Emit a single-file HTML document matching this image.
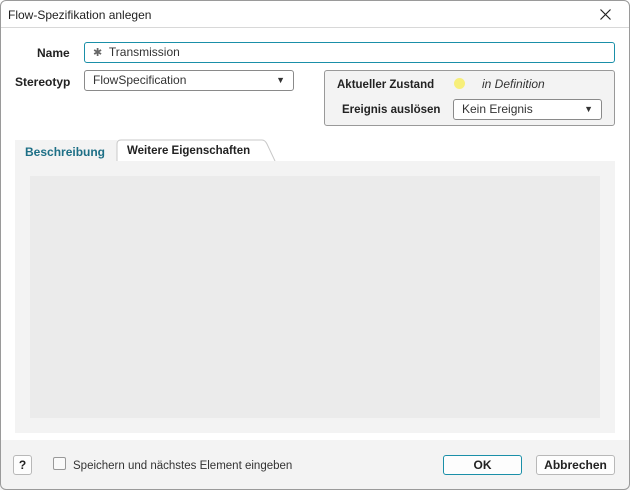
<!DOCTYPE html>
<html><head><style>
*{box-sizing:border-box;margin:0;padding:0}
body{width:630px;height:490px;font-family:"Liberation Sans",sans-serif;font-size:12px;line-height:14px;color:#222;background:#fff;position:relative;overflow:hidden}
.abs{position:absolute}
.lbl{font-weight:bold;font-size:12px;color:#222}
.box{border:1px solid #8a8a8a;border-radius:3px;background:#fff;padding-left:8px;line-height:18px;font-size:12px;color:#333}
.arr{position:absolute;right:8px;top:0;font-size:9px;color:#333}
.btn{border:1px solid #b8b8b8;border-radius:3px;background:#fdfdfd;text-align:center;line-height:18px;font-weight:bold;font-size:12px}
</style></head><body>
<div class="abs" style="left:8px;top:8px;font-size:12px">Flow-Spezifikation anlegen</div>
<svg class="abs" style="left:600px;top:9px" width="11" height="11"><path d="M0.5 0.5L10.5 10.5M10.5 0.5L0.5 10.5" stroke="#222" stroke-width="1.2"/></svg>
<div class="abs" style="left:0;top:27px;width:630px;height:1px;background:#d8d8d8"></div>

<div class="abs lbl" style="left:37px;top:46px">Name</div>
<div class="abs box" style="left:84px;top:42px;width:531px;height:21px;border-color:#1a8fa8"><span style="color:#666;font-size:11px">✱</span>&nbsp;&nbsp;Transmission</div>
<div class="abs lbl" style="left:15px;top:75px">Stereotyp</div>
<div class="abs box" style="left:84px;top:70px;width:210px;height:21px">FlowSpecification<span class="arr">▼</span></div>

<div class="abs" style="left:324px;top:70px;width:291px;height:56px;background:#f3f3f3;border:1px solid #999;border-radius:3px"></div>
<div class="abs lbl" style="left:337px;top:78px;font-size:11.5px">Aktueller Zustand</div>
<div class="abs" style="left:454px;top:78px;width:11px;height:11px;border-radius:50%;background:#f7ef7a"></div>
<div class="abs" style="left:482px;top:77px;font-style:italic;color:#333">in Definition</div>
<div class="abs lbl" style="left:342px;top:103px;font-size:11.5px">Ereignis auslösen</div>
<div class="abs box" style="left:453px;top:99px;width:149px;height:21px">Kein Ereignis<span class="arr">▼</span></div>

<div class="abs" style="left:15px;top:140px;width:102px;height:22px;background:#f3f3f3"></div>
<div class="abs" style="left:25px;top:145px;font-weight:bold;color:#1d6f86">Beschreibung</div>
<svg class="abs" style="left:116px;top:139px" width="160" height="23"><path d="M1 22V5Q1 1 5 1H146Q149 1 151 5L159 22" fill="#fff" stroke="#c8c8c8"/></svg>
<div class="abs lbl" style="left:127px;top:144px;font-size:11.5px">Weitere Eigenschaften</div>
<div class="abs" style="left:15px;top:161px;width:600px;height:272px;background:#f3f3f3"></div>
<div class="abs" style="left:30px;top:176px;width:570px;height:242px;background:#ebebeb"></div>

<div class="abs" style="left:0;top:440px;width:630px;height:50px;background:#f3f3f3"></div>
<div class="abs btn" style="left:13px;top:455px;width:19px;height:20px">?</div>
<div class="abs" style="left:53px;top:457px;width:13px;height:13px;border:1px solid #999;border-radius:2px;background:#fafafa"></div>
<div class="abs" style="left:73px;top:459px;color:#333;font-size:11.5px">Speichern und nächstes Element eingeben</div>
<div class="abs btn" style="left:443px;top:455px;width:79px;height:20px;border-color:#1a8fa8">OK</div>
<div class="abs btn" style="left:536px;top:455px;width:79px;height:20px">Abbrechen</div>
<div class="abs" style="left:0;top:0;width:630px;height:490px;border:1px solid #9a9a9a;border-radius:6px;pointer-events:none"></div>
</body></html>
